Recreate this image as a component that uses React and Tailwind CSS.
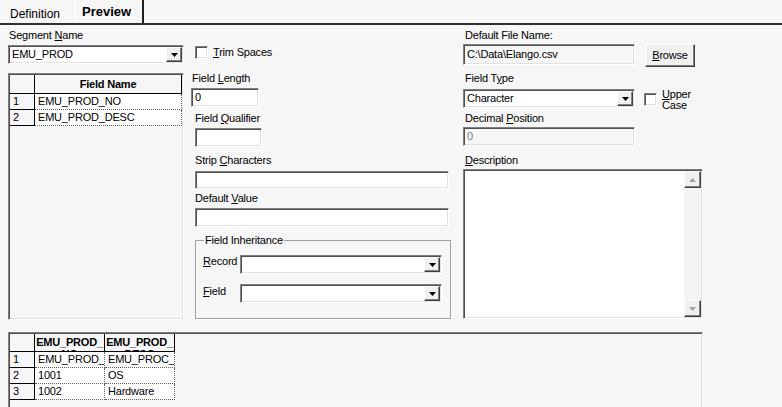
import React from 'react';

// classic win32 3D borders
const sunken =
  'border border-t-[#808080] border-l-[#808080] border-b-white border-r-white shadow-[inset_1px_1px_0_#505050,inset_-1px_-1px_0_#e2e2e2]';
const raised =
  'border border-t-white border-l-white border-b-[#404040] border-r-[#404040] shadow-[inset_-1px_-1px_0_#808080]';

const Arrow = ({ color = '#000', up }) => (
  <svg width="7" height="4" viewBox="0 0 7 4">
    <path d={up ? 'M3.5 0L7 4H0z' : 'M0 0h7L3.5 4z'} fill={color} />
  </svg>
);

const Label = ({ children, className = '' }) => (
  <div className={`h-[13px] leading-[13px] whitespace-nowrap ${className}`}>{children}</div>
);

const Input = ({ value = '', disabled, className = '' }) => (
  <div
    className={`${sunken} ${disabled ? 'bg-[#f6f6f6] text-[#808080]' : 'bg-white'} flex items-center pl-[3px] ${className}`}
  >
    <span>{value}</span>
  </div>
);

const Combo = ({ value = '', className = '' }) => (
  <div className={`${sunken} bg-white flex p-[1px] ${className}`}>
    <div className="flex-1 flex items-center pl-[2px] truncate">{value}</div>
    <div className={`${raised} w-[16px] bg-[#f0f0f0] flex items-center justify-center`}>
      <Arrow />
    </div>
  </div>
);

const Checkbox = () => <div className={`${sunken} bg-white w-[13px] h-[13px] shrink-0`} />;

const fieldRows = ['EMU_PROD_NO', 'EMU_PROD_DESC'];

const previewRows = [
  ['EMU_PROD_', 'EMU_PROC_'],
  ['1001', 'OS'],
  ['1002', 'Hardware'],
];

function FieldGrid() {
  return (
    <div className={`${sunken} mt-[9px] h-[247px] bg-[#f6f6f6] p-[1px]`}>
      <div className="flex h-[19px]">
        <div className="w-[25px] border-r border-b border-black" />
        <div className="w-[147px] border-r border-b border-black flex items-center justify-center font-bold">
          Field Name
        </div>
      </div>
      {fieldRows.map((name, idx) => (
        <div key={idx} className="flex h-[16px]">
          <div className="w-[25px] border-r border-b border-black pl-[3px] leading-[15px]">{idx + 1}</div>
          <div className="w-[147px] bg-white border-r border-b border-dotted border-[#606060] pl-[3px] leading-[15px]">
            {name}
          </div>
        </div>
      ))}
    </div>
  );
}

function PreviewGrid() {
  return (
    <div className={`${sunken} ml-[8px] mt-[12px] w-[695px] h-[80px] bg-[#f6f6f6] p-[1px]`}>
      <div className="flex h-[18px]">
        <div className="w-[25px] border-r border-b border-black" />
        {[
          ['EMU_PROD_', 'NO'],
          ['EMU_PROD_', 'DESC'],
        ].map(([a, b], i) => (
          <div
            key={i}
            className="w-[70px] h-[18px] border-r border-b border-black overflow-hidden text-center font-bold leading-[12px] pt-[2px]"
          >
            <div>{a}</div>
            <div>{b}</div>
          </div>
        ))}
      </div>
      {previewRows.map((row, idx) => (
        <div key={idx} className="flex h-[16px]">
          <div className="w-[25px] border-r border-b border-black pl-[3px] leading-[15px]">{idx + 1}</div>
          {row.map((cell, j) => (
            <div
              key={j}
              className="w-[70px] bg-white border-r border-b border-dotted border-[#606060] pl-[3px] leading-[15px] overflow-hidden whitespace-nowrap"
            >
              {cell}
            </div>
          ))}
        </div>
      ))}
    </div>
  );
}

export default function App() {
  return (
    <div className="w-[782px] h-[407px] overflow-hidden bg-[#f6f6f6] text-black text-[11px] tracking-[-0.2px] font-['Liberation_Sans',Arial,sans-serif]">
      {/* Tabs */}
      <div className="flex h-[25px] border-b-2 border-[#303030]">
        <div className="w-[76px] border-r border-white pl-[10px] pt-[5px] text-[12px] tracking-normal">Definition</div>
        <div className="w-[68px] border-r-2 border-[#202020] pl-[6px] pt-[2px] text-[13px] font-bold tracking-normal">
          Preview
        </div>
      </div>

      <div className="flex">
        {/* Left column */}
        <div className="ml-[8px] w-[176px] flex flex-col">
          <Label className="mt-[4px] pl-[1px]">
            Segment <u>N</u>ame
          </Label>
          <Combo value="EMU_PROD" className="mt-[3px] h-[19px]" />
          <FieldGrid />
        </div>

        {/* Middle column */}
        <div className="ml-[7px] w-[261px] flex flex-col">
          <div className="mt-[21px] h-[13px] ml-[4px] flex items-center">
            <Checkbox />
            <span className="ml-[5px]">
              <u>T</u>rim Spaces
            </span>
          </div>
          <Label className="mt-[13px] ml-[1px]">
            Field <u>L</u>ength
          </Label>
          <Input value="0" className="mt-[3px] h-[19px] w-[68px]" />
          <Label className="mt-[5px] ml-[4px]">
            Field <u>Q</u>ualifier
          </Label>
          <Input className="mt-[3px] ml-[4px] h-[19px] w-[67px]" />
          <Label className="mt-[7px] ml-[4px]">
            Strip <u>C</u>haracters
          </Label>
          <Input className="mt-[4px] ml-[4px] h-[18px] w-[254px]" />
          <Label className="mt-[3px] ml-[4px]">
            Default <u>V</u>alue
          </Label>
          <Input className="mt-[3px] ml-[4px] h-[19px] w-[254px]" />

          <fieldset className="mt-[7px] ml-[4px] w-[256px] h-[85px] border border-[#a0a0a0] shadow-[1px_1px_0_#ffffff] px-[7px]">
            <legend className="ml-[1px] px-[1px] leading-[13px]">Field Inheritance</legend>
            <div className="mt-[8px] flex items-start">
              <Label className="w-[37px]">
                <u>R</u>ecord
              </Label>
              <Combo className="h-[19px] w-[202px]" />
            </div>
            <div className="mt-[10px] flex items-start">
              <Label className="w-[37px] mt-[1px]">
                <u>F</u>ield
              </Label>
              <Combo className="h-[19px] w-[202px]" />
            </div>
          </fieldset>
        </div>

        {/* Right column */}
        <div className="ml-[11px] w-[240px] flex flex-col">
          <Label className="mt-[4px] ml-[2px]">Default File Name:</Label>
          <div className="mt-[2px] flex items-start">
            <Input value="C:\Data\Elango.csv" disabled className="h-[21px] w-[172px] !text-black" />
            <button
              className={`${raised} ml-[10px] w-[50px] h-[23px] bg-[#f0f0f0] flex items-center justify-center`}
            >
              <span>
                <u>B</u>rowse
              </span>
            </button>
          </div>
          <Label className="mt-[5px] ml-[2px]">
            Field T<u>y</u>pe
          </Label>
          <div className="mt-[4px] flex items-start">
            <Combo value="Character" className="h-[19px] w-[172px]" />
            <div className="ml-[9px] mt-[4px]">
              <Checkbox />
            </div>
            <div className="ml-[5px] leading-[11px]">
              <div>
                <u>U</u>pper
              </div>
              <div>Case</div>
            </div>
          </div>
          <Label className="mt-[1px] ml-[2px]">
            Decimal <u>P</u>osition
          </Label>
          <Input value="0" disabled className="mt-[2px] h-[19px] w-[172px]" />
          <Label className="mt-[8px] ml-[2px]">
            <u>D</u>escription
          </Label>
          <div className={`${sunken} mt-[2px] h-[150px] w-[240px] bg-white flex justify-end p-[1px]`}>
            <div className="w-[17px] flex flex-col bg-[#f3f3f3]">
              <div className={`${raised} h-[17px] bg-[#f0f0f0] flex items-center justify-center`}>
                <Arrow color="#a0a0a0" up />
              </div>
              <div className="flex-1" />
              <div className={`${raised} h-[17px] bg-[#f0f0f0] flex items-center justify-center`}>
                <Arrow color="#a0a0a0" />
              </div>
            </div>
          </div>
        </div>
      </div>

      <PreviewGrid />
    </div>
  );
}
